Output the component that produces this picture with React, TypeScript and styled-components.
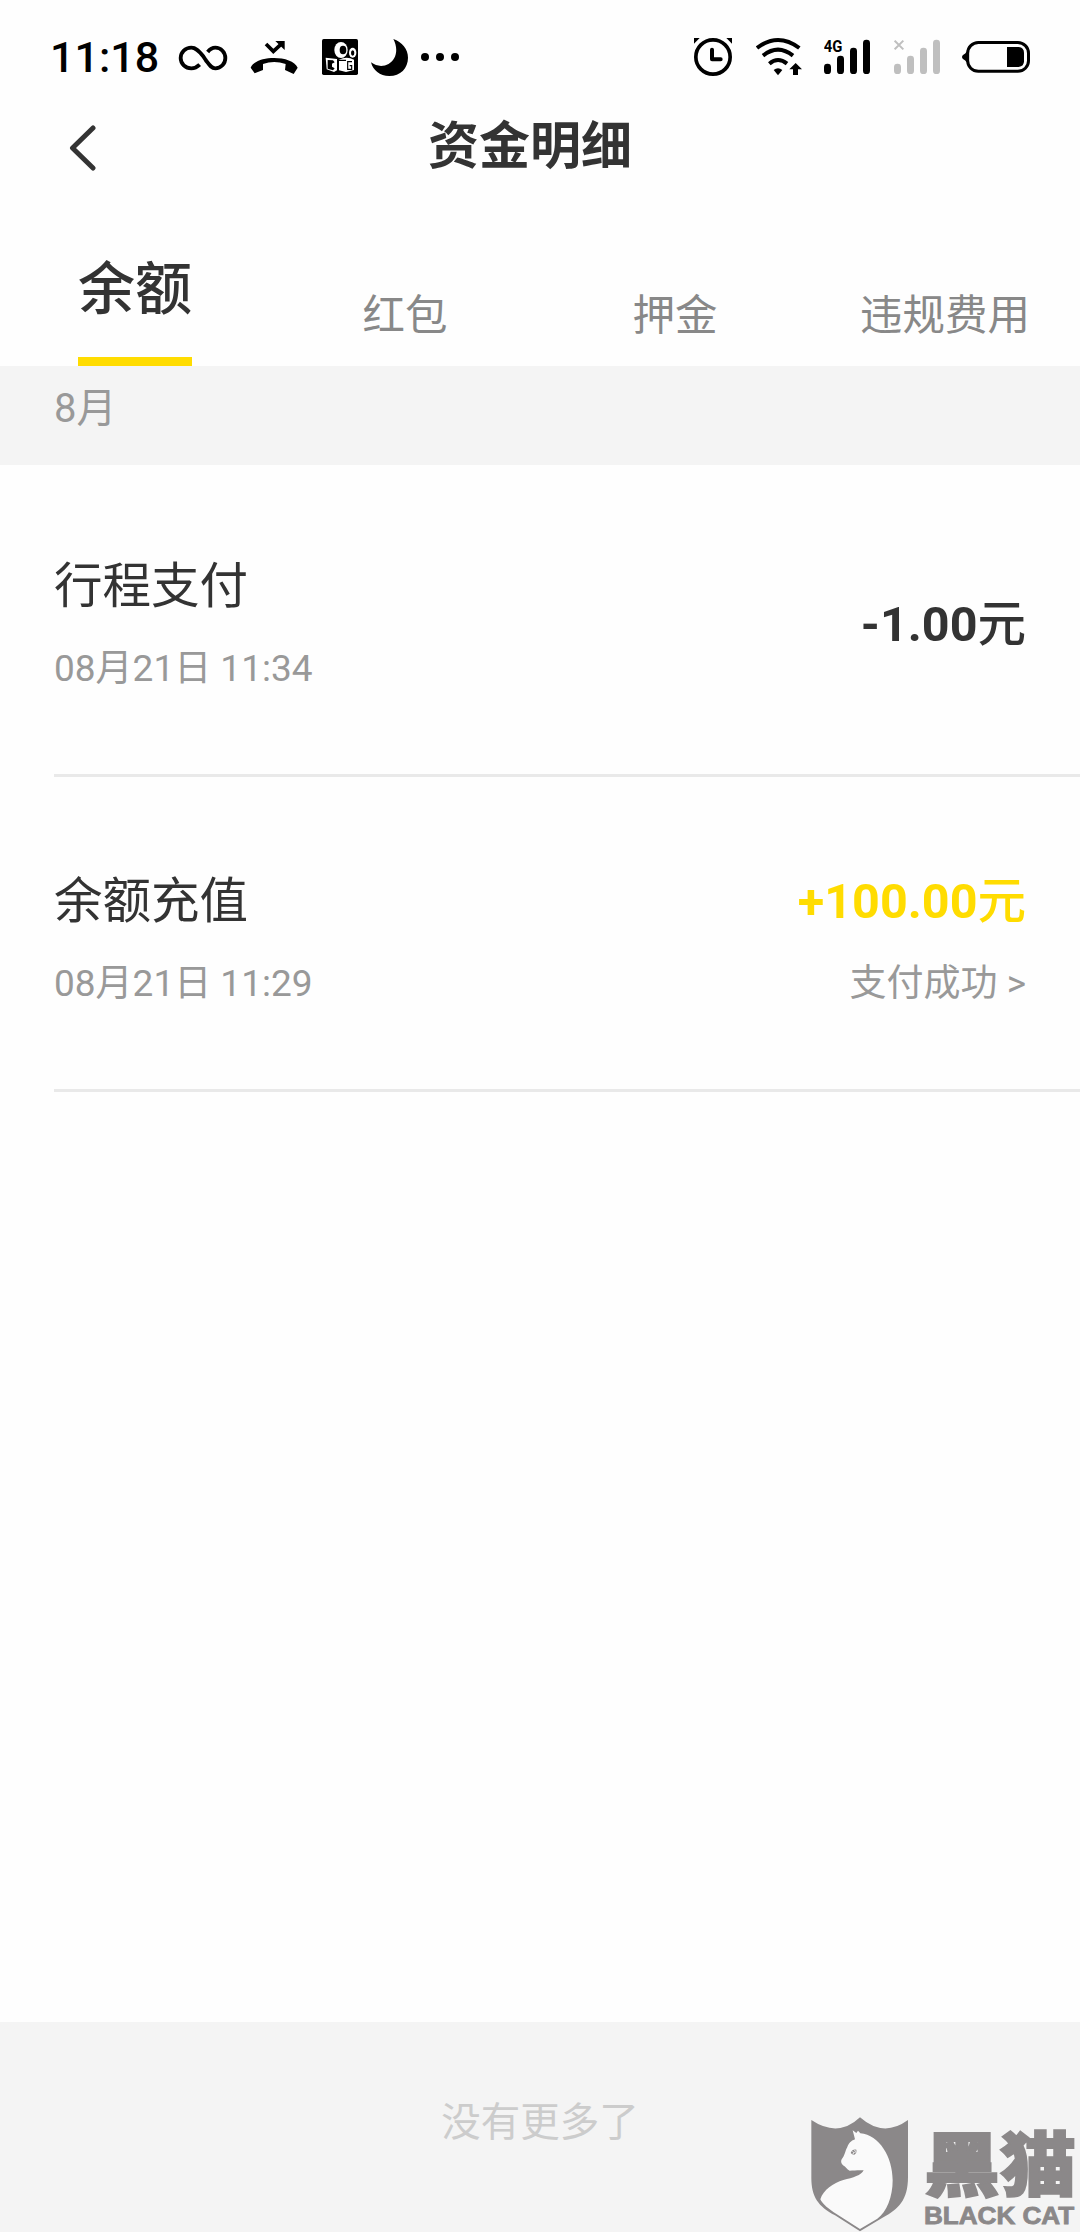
import React from 'react';
import styled, { createGlobalStyle } from 'styled-components';

const GlobalStyle = createGlobalStyle`
  body {
    margin: 0;
    background: #fefefe;
    font-family: Roboto, 'Noto Sans CJK SC', sans-serif;
    color: #333;
  }
`;

const Screen = styled.div`
  position: relative;
  display: flex;
  flex-direction: column;
  width: 1080px;
  height: 2232px;
  overflow: hidden;
  background: #fefefe;
`;

const StatusBar = styled.div`
  display: flex;
  align-items: center;
  height: 40px;
  padding: 37px 50px 0 50px;
  color: #000;
`;

const Clock = styled.span`
  width: 108px;
  font-size: 43px;
  font-weight: 500;
  line-height: 40px;
  white-space: nowrap;
`;

const StatusIcon = styled.svg<{ $gap: number }>`
  flex: none;
  display: block;
  height: 40px;
  margin-left: ${(p) => p.$gap}px;
`;

const Spacer = styled.div`
  flex: 1;
`;

const NavBar = styled.header`
  display: grid;
  grid-template-columns: 96px 1fr 116px;
  align-items: center;
  height: 139px;
`;

const BackButton = styled.button`
  display: flex;
  justify-content: flex-end;
  padding: 0;
  border: 0;
  background: none;
`;

const Title = styled.h1`
  margin: 0;
  font-size: 51px;
  font-weight: 700;
  line-height: 60px;
  text-align: center;
`;

const Tabs = styled.nav`
  display: grid;
  grid-template-columns: repeat(4, 1fr);
  height: 150px;
`;

const Tab = styled.div<{ $active?: boolean }>`
  display: flex;
  flex-direction: column;
  justify-content: space-between;
  justify-self: center;
  box-sizing: border-box;
  padding-top: ${(p) => (p.$active ? 40 : 66)}px;
  border-bottom: 9px solid ${(p) => (p.$active ? '#ffdc00' : 'transparent')};
  color: ${(p) => (p.$active ? '#333' : '#888')};
  font-size: ${(p) => (p.$active ? 57 : 42.5)}px;
  font-weight: ${(p) => (p.$active ? 500 : 400)};
  line-height: 68px;
  white-space: nowrap;
`;

const Month = styled.div`
  height: 99px;
  padding-left: 54px;
  background: #f4f4f4;
  color: #999;
  font-size: 40px;
  line-height: 86px;
`;

const List = styled.ul`
  flex: 1;
  margin: 0;
  padding: 0;
  list-style: none;
`;

const Row = styled.li<{ $first?: boolean }>`
  display: flex;
  justify-content: space-between;
  box-sizing: border-box;
  height: ${(p) => (p.$first ? 312 : 315)}px;
  margin-left: 54px;
  padding: ${(p) => (p.$first ? 94 : 97)}px 54px 83px 0;
  border-bottom: 3px solid #e9e9e9;
`;

const Column = styled.div<{ $end?: boolean }>`
  display: flex;
  flex-direction: column;
  align-items: ${(p) => (p.$end ? 'flex-end' : 'flex-start')};
  justify-content: ${(p) => (p.$end ? 'center' : 'flex-start')};
  gap: 32px;
`;

const RowTitle = styled.span`
  font-size: 48.5px;
  line-height: 56px;
`;

const Note = styled.span`
  color: #999;
  font-size: 37px;
  line-height: 44px;
`;

const Amount = styled.span<{ $income?: boolean }>`
  color: ${(p) => (p.$income ? '#ffdc00' : '#333')};
  font-size: 48.5px;
  font-weight: 700;
  line-height: 56px;
`;

const Unit = styled.span`
  font-weight: 500;
`;

const Footer = styled.footer`
  height: 210px;
  background: #f4f4f4;
  color: #ccc;
  font-size: 39.5px;
  line-height: 202px;
  text-align: center;
`;

const Watermark = styled.div`
  position: absolute;
  right: 0;
  bottom: 0;
  display: flex;
  width: 270px;
  height: 115px;
  color: #8b8889;
`;

const Brand = styled.div`
  display: flex;
  flex-direction: column;
  margin-left: 14px;
`;

const BrandName = styled.span`
  height: 84px;
  font-family: 'Noto Sans CJK SC', sans-serif;
  font-size: 76px;
  font-weight: 900;
  line-height: 86px;
  white-space: nowrap;
  transform: scaleY(0.93);
  -webkit-text-stroke: 2px #8b8889;
`;

const BrandLatin = styled.span`
  font-family: 'Liberation Sans', sans-serif;
  font-size: 23.5px;
  font-weight: 700;
  line-height: 30px;
  white-space: nowrap;
  transform: scaleX(1.11);
  transform-origin: left;
  -webkit-text-stroke: 0.8px #8b8889;
`;

const Bars = ({ x }: { x: number }) => (
  <g>
    <rect x={x} y="131" width="21" height="31" rx="10" />
    <rect x={x + 39} y="107" width="21" height="55" rx="10" />
    <rect x={x + 78} y="83" width="21" height="79" rx="10" />
    <rect x={x + 117} y="59" width="21" height="103" rx="10" />
  </g>
);

const entries = [
  { title: '行程支付', time: '08月21日 11:34', amount: '-1.00', income: false, status: '' },
  { title: '余额充值', time: '08月21日 11:29', amount: '+100.00', income: true, status: '支付成功 >' },
];

export default function App() {
  return (
    <Screen>
      <GlobalStyle />
      <StatusBar>
        <Clock>11:18</Clock>
        <StatusIcon $gap={20} width="50" viewBox="444 51 150 120">
          <path
            d="M509 134 C500 143 492 145 484 145 C466 145 452 131 452 114 C452 97 466 83 484 83 C497 83 505 91 519 108 L527 120 C537 133 543 145 556 145 C573 145 586 131 586 114 C586 97 573 83 556 83 C547 83 540 87 533 96"
            fill="none"
            stroke="#000"
            strokeWidth="11.5"
          />
        </StatusIcon>
        <StatusIcon $gap={22} width="48" viewBox="31 51 144 120">
          <path d="M33 143 C48 104 158 104 174 143 L162 162 L136 150 L138 132 Q103 120 70 132 L70 150 L45 160 Z" />
          <path d="M79 72 L101 94 L127 70" fill="none" stroke="#000" strokeWidth="11" />
          <path d="M107 63 H135 V90 Z" />
        </StatusIcon>
        <StatusIcon $gap={24} width="36" viewBox="246 51 108 120">
          <rect x="246" y="57" width="108" height="108" rx="5" />
          <ellipse cx="303" cy="90" rx="20" ry="24" fill="#fff" />
          <ellipse cx="309" cy="90" rx="10" ry="13" />
          <ellipse cx="338" cy="98" rx="11" ry="15" fill="#fff" />
          <ellipse cx="338" cy="99" rx="5" ry="8" />
          <path d="M257 113 L291 117 V151 L282 156 L260 148 Z" fill="#fff" />
          <path d="M263 120 L279 121 L284 127 L276 131 V140 L284 145 L279 151 L263 146 Z" />
          <path d="M297 119 Q320 108 342 119 V150 L318 156 L297 151 Z" fill="#fff" />
          <path d="M297 121 H318 M336 125 H323 V148 H335 V137 H329" fill="none" stroke="#000" strokeWidth="3.5" />
        </StatusIcon>
        <StatusIcon $gap={13} width="37" viewBox="393 51 111 120">
          <path d="M460 57 C486 66 504 87 504 113 C504 145 481 168 448 168 C419 168 399 151 393 127 C433 158 491 118 460 57 Z" />
        </StatusIcon>
        <StatusIcon $gap={13} width="38" viewBox="543 51 114 120">
          <circle cx="555" cy="111" r="12" />
          <circle cx="600" cy="111" r="12" />
          <circle cx="645" cy="111" r="12" />
        </StatusIcon>
        <Spacer />
        <StatusIcon $gap={0} width="38" viewBox="42 51 114 120">
          <circle cx="99" cy="111" r="51.5" fill="none" stroke="#000" strokeWidth="11" />
          <path d="M42 54 H59 L42 71 Z M156 54 H139 L156 71 Z" />
          <path d="M96 89 V118 H122" fill="none" stroke="#000" strokeWidth="12" strokeLinecap="round" strokeLinejoin="round" />
        </StatusIcon>
        <StatusIcon $gap={24} width="46" viewBox="228 51 138 120">
          <g fill="none" stroke="#000" strokeWidth="12">
            <path d="M231 84 Q294 36 358 84" />
            <path d="M249 107 Q294 71 339 107" />
            <path d="M268 131 Q294 109 321 131" />
          </g>
          <path d="M281 150 Q294 139 307 150 L294 166 Z" />
          <path d="M347 129 L366 148 H354 V165 H339 V148 H328 Z" />
        </StatusIcon>
        <StatusIcon $gap={22} width="46" viewBox="432 51 138 120">
          <text x="431" y="96" fontSize="47" fontWeight="700" textLength="56" lengthAdjust="spacingAndGlyphs" fontFamily="Roboto, sans-serif">
            4G
          </text>
          <Bars x={432} />
        </StatusIcon>
        <StatusIcon $gap={24} width="46" viewBox="72 51 138 120" fill="#bfbfbf">
          <path d="M74 62 L100 88 M100 62 L74 88" stroke="#bfbfbf" strokeWidth="6" />
          <Bars x={72} />
        </StatusIcon>
        <StatusIcon $gap={22} width="68" viewBox="276 51 204 120">
          <rect x="293" y="67.5" width="182.5" height="86.5" rx="32" fill="none" stroke="#000" strokeWidth="9" />
          <path d="M294 96 H289 Q287 101 280 104 Q276 107 276 111 Q276 115 280 118 Q287 121 289 126 H294 Z" />
          <path d="M411 81 H446 Q462 83 462 98 V124 Q462 139 446 141 H411 Z" />
        </StatusIcon>
      </StatusBar>

      <NavBar>
        <BackButton aria-label="返回">
          <svg width="28" height="48" viewBox="0 0 28 48">
            <path d="M25 4 L4.500 24 L25 44" transform="translate(0 1)" fill="none" stroke="#333" strokeWidth="5" strokeLinecap="round" strokeLinejoin="round" />
          </svg>
        </BackButton>
        <Title>资金明细</Title>
      </NavBar>

      <Tabs>
        <Tab $active>余额</Tab>
        <Tab>红包</Tab>
        <Tab>押金</Tab>
        <Tab>违规费用</Tab>
      </Tabs>

      <Month>8月</Month>

      <List>
        {entries.map((entry, i) => (
          <Row key={entry.title} $first={i === 0}>
            <Column>
              <RowTitle>{entry.title}</RowTitle>
              <Note>{entry.time}</Note>
            </Column>
            <Column $end>
              <Amount $income={entry.income}>
                {entry.amount}
                <Unit>元</Unit>
              </Amount>
              {entry.status && <Note>{entry.status}</Note>}
            </Column>
          </Row>
        ))}
      </List>

      <Footer>没有更多了</Footer>

      <Watermark>
        <svg width="100" height="115" viewBox="60 50 300 345">
          <path d="M64 59 Q145 113 210 51 Q280 113 354 59 V230 C354 300 325 326 280 351 L210 393 L135 345 C85 318 64 290 64 232 Z" fill="#8b8889" />
          <path
            d="M188 90 L199 98 L204 91 L211 99 C268 104 308 170 308 240 C308 290 290 335 262 355 L210 386 L130 335 C108 320 96 308 91 297 C100 268 130 248 160 239 C190 232 214 225 221 210 C205 209 190 211 179 211 C170 208 168 199 159 195 C153 190 152 182 155 177 C165 164 166 150 171 142 C177 128 182 122 195 117 Z"
            fill="#fafafa"
          />
          <path d="M182 158 Q187 146 199 148 Q201 158 193 163 Q186 163 182 158 Z" fill="#8b8889" />
          <path d="M188 153 Q193 157 189 161 M194 149 Q198 154 194 158" fill="none" stroke="#fafafa" strokeWidth="3" />
        </svg>
        <Brand>
          <BrandName>黑猫</BrandName>
          <BrandLatin>BLACK CAT</BrandLatin>
        </Brand>
      </Watermark>
    </Screen>
  );
}
